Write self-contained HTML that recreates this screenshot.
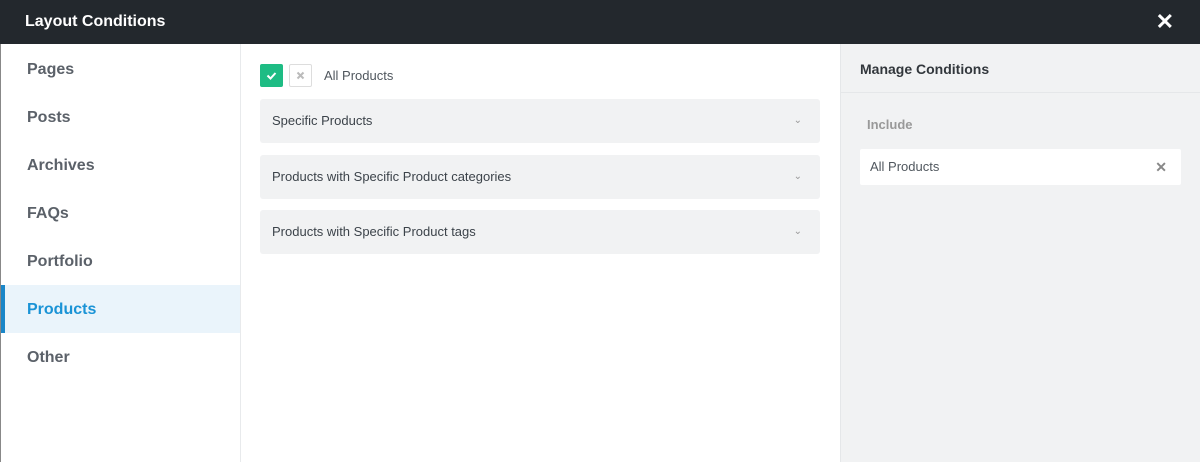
<!DOCTYPE html>
<html><head><style>
*{box-sizing:border-box;margin:0;padding:0}
body{width:1200px;height:462px;overflow:hidden;font-family:"Liberation Sans",sans-serif;background:#fff;position:relative}
.hd{position:absolute;left:0;top:0;width:1200px;height:44px;background:#23282d;color:#fff;font-weight:bold;font-size:16px;line-height:44px;padding-left:25px}
.hd .x{position:absolute;right:26px;top:0;font-size:22px}
.lb{position:absolute;left:0;top:44px;width:1px;height:418px;background:#888}
.side{position:absolute;left:1px;top:44px;width:240px;height:418px;border-right:1px solid #e8eaec}
.side div{height:48px;line-height:50px;padding-left:26px;font-weight:bold;font-size:16px;color:#5b6169}
.side .act{background:#eaf4fb;color:#1a93d6;border-left:4px solid #1a86c8;padding-left:22px}
.cb{position:absolute;top:64px;width:23px;height:23px;border-radius:2px}
.acc{position:absolute;left:260px;width:560px;height:44px;background:#f1f2f3;border-radius:3px;font-size:13px;color:#3c434a;line-height:44px;padding-left:12px}
.acc span{position:absolute;right:18px;top:0;color:#999;font-size:10px}
.rp{position:absolute;left:840px;top:44px;width:360px;height:418px;background:#f1f2f3;border-left:1px solid #e5e7e9}
</style></head><body>
<div class="hd">Layout Conditions<span class="x">✕</span></div>
<div class="lb"></div>
<div class="side" style="padding-top:1px">
<div>Pages</div><div>Posts</div><div>Archives</div><div>FAQs</div><div>Portfolio</div><div class="act">Products</div><div>Other</div>
</div>
<div class="cb" style="left:260px;background:#1ebc84"><svg width="23" height="23"><path d="M7.5 11.5l3 3 5-5.5" stroke="#fff" stroke-width="2" fill="none"/></svg></div>
<div class="cb" style="left:289px;border:1px solid #ddd;background:#fff"><svg width="21" height="21"><path d="M7.5 7.5l6 6M13.5 7.5l-6 6" stroke="#bbb" stroke-width="2"/></svg></div>
<div style="position:absolute;left:324px;top:68px;font-size:13px;color:#50575e">All Products</div>
<div class="acc" style="top:99px">Specific Products<span>⌄</span></div>
<div class="acc" style="top:155px">Products with Specific Product categories<span>⌄</span></div>
<div class="acc" style="top:210px">Products with Specific Product tags<span>⌄</span></div>
<div class="rp">
<div style="height:49px;border-bottom:1px solid #e5e7e9;padding:17px 0 0 19px;font-weight:bold;font-size:14px;color:#32373c">Manage Conditions</div>
<div style="position:absolute;left:26px;top:73px;font-weight:bold;font-size:13px;color:#999">Include</div>
<div style="position:absolute;left:19px;top:105px;width:321px;height:36px;background:#fff;border-radius:2px;font-size:13px;color:#50575e;line-height:36px;padding-left:10px">All Products<span style="position:absolute;right:14px;color:#888;font-weight:bold;font-size:14px">✕</span></div>
</div>
</body></html>
